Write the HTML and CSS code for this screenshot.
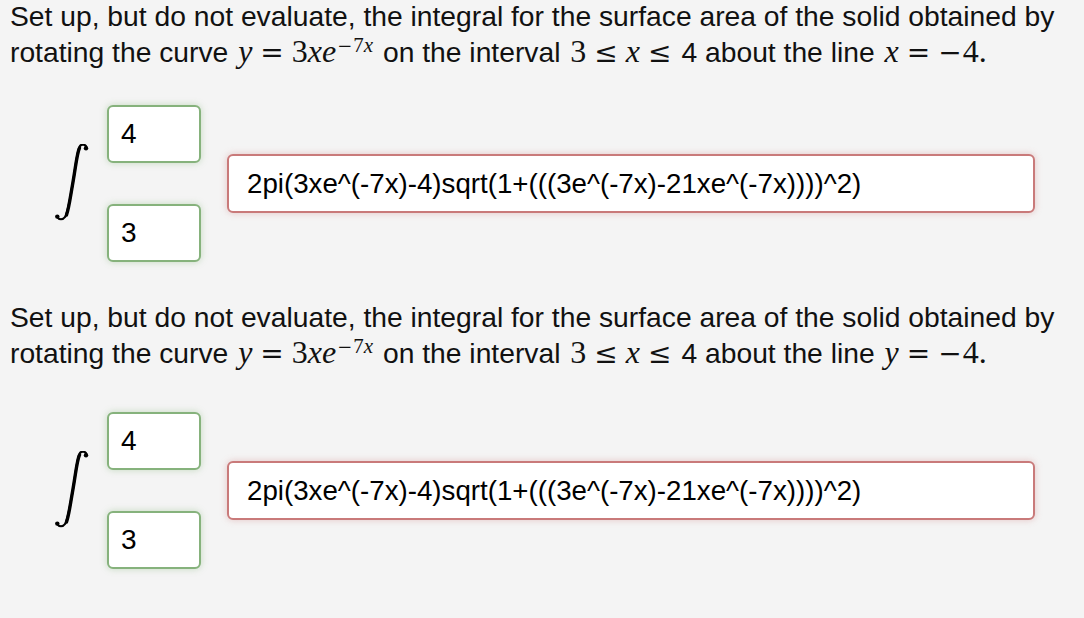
FILE: index.html
```html
<!DOCTYPE html>
<html>
<head>
<meta charset="utf-8">
<link rel="stylesheet" href="styles.css">
</head>
<body>
<div class="problem first">
  <p class="q">Set up, but do not evaluate, the integral for the surface area of the solid obtained by<br>rotating the curve <span class="m"><i>y</i><span class="rel">=</span>3<i>xe</i><sup><span class="op">−</span>7<i>x</i></sup></span> on the interval <span class="m">3<span class="rel">≤</span><i>x</i><span class="rel">≤</span></span>4 about the line <span class="m"><i>x</i><span class="rel">=</span><span class="op">−</span>4.</span></p>
  <div class="row">
    <svg class="int" width="40" height="80" viewBox="0 0 40 80">
      <path d="M36.5 3.5 C36 0.5 32 -0.5 30 2 C27 6 26 21 23 38 C20 55 18 69 15 73 C13 76 9 76 7 73" fill="none" stroke="#000" stroke-width="2.2" stroke-linecap="round"/>
      <path d="M29.5 4 C27 9 26 21 23 38 C20 55 19 64 16.5 71" fill="none" stroke="#000" stroke-width="3.4" stroke-linecap="round"/>
      <circle cx="36" cy="4.3" r="2.2" fill="#000"/>
      <circle cx="7.3" cy="72.6" r="2.2" fill="#000"/>
    </svg>
    <div class="limits">
      <div class="inp small">4</div>
      <div class="inp small">3</div>
    </div>
    <div class="inp main">2pi(3xe^(-7x)-4)sqrt(1+(((3e^(-7x)-21xe^(-7x))))^2)</div>
  </div>
</div>
<div class="problem second">
  <p class="q">Set up, but do not evaluate, the integral for the surface area of the solid obtained by<br>rotating the curve <span class="m"><i>y</i><span class="rel">=</span>3<i>xe</i><sup><span class="op">−</span>7<i>x</i></sup></span> on the interval <span class="m">3<span class="rel">≤</span><i>x</i><span class="rel">≤</span></span>4 about the line <span class="m"><i>y</i><span class="rel">=</span><span class="op">−</span>4.</span></p>
  <div class="row">
    <svg class="int" width="40" height="80" viewBox="0 0 40 80">
      <path d="M36.5 3.5 C36 0.5 32 -0.5 30 2 C27 6 26 21 23 38 C20 55 18 69 15 73 C13 76 9 76 7 73" fill="none" stroke="#000" stroke-width="2.2" stroke-linecap="round"/>
      <path d="M29.5 4 C27 9 26 21 23 38 C20 55 19 64 16.5 71" fill="none" stroke="#000" stroke-width="3.4" stroke-linecap="round"/>
      <circle cx="36" cy="4.3" r="2.2" fill="#000"/>
      <circle cx="7.3" cy="72.6" r="2.2" fill="#000"/>
    </svg>
    <div class="limits">
      <div class="inp small">4</div>
      <div class="inp small">3</div>
    </div>
    <div class="inp main">2pi(3xe^(-7x)-4)sqrt(1+(((3e^(-7x)-21xe^(-7x))))^2)</div>
  </div>
</div>
</body>
</html>
```
FILE: styles.css
```css
html, body {
  margin: 0;
  padding: 0;
  background: #f4f4f4;
}
body {
  font-family: "Liberation Sans", Arial, sans-serif;
  color: #111;
  width: 1084px;
  height: 618px;
  overflow: hidden;
}
.problem {
  padding-left: 10px;
}
.q {
  margin: 0;
  font-size: 28.25px;
  line-height: 36px;
  white-space: nowrap;
}
.m {
  font-family: "Liberation Serif", "Times New Roman", serif;
  font-size: 32px;
  line-height: 0;
  margin: 0 2px;
}
.m i {
  font-style: italic;
}
.rel, .op {
  font-family: "DejaVu Serif", "Liberation Serif", serif;
  font-size: 28px;
}
.rel {
  margin: 0 8px;
}
.op {
  margin-right: 1px;
}
.m sup {
  font-size: 21px;
  line-height: 0;
  vertical-align: 0;
  position: relative;
  top: -10px;
  margin-left: 1px;
}
.m sup .op {
  font-size: 18px;
}
.first .q { margin-top: -2px; }
.first .row { margin-top: 35px; }
.second { margin-top: 37px; }
.second .row { margin-top: 41px; }
.row {
  display: flex;
  align-items: center;
}
.int {
  margin-left: 40px;
  display: block;
}
.limits {
  margin-left: 17px;
  display: flex;
  flex-direction: column;
  gap: 41px;
}
.inp {
  box-sizing: border-box;
  background: #fff;
  border: 2px solid;
  border-radius: 6px;
  display: flex;
  align-items: center;
  color: #000;
  font-size: 28px;
}
.small {
  width: 94px;
  height: 58px;
  border-color: #86b27c;
  box-shadow: 0 0 7px rgba(110, 170, 95, 0.35);
  padding-left: 12px;
}
.main {
  margin-left: 26px;
  width: 808px;
  height: 59px;
  border-color: #c97a7a;
  box-shadow: 0 0 7px rgba(200, 110, 110, 0.35);
  padding-left: 18px;
  white-space: nowrap;
  font-size: 27.7px;
}
```
